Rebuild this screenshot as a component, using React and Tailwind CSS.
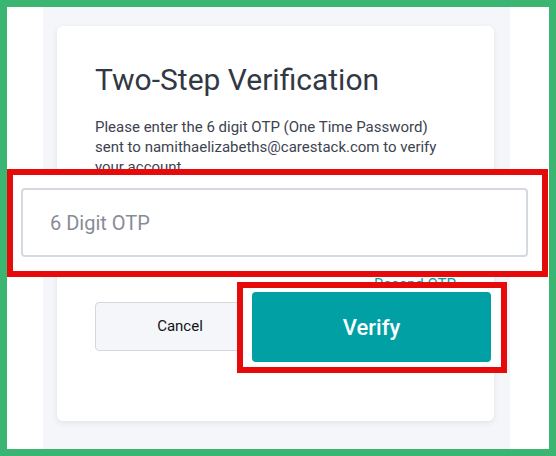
export default function App() {
    return (
        <div className="relative w-[556px] h-[456px] border-[7px] border-[#3bb672] bg-white overflow-hidden font-['Roboto',sans-serif]">
            <div className="flex h-full">
                <div className="w-[36px] bg-white" />

                <div className="w-[467px] h-full bg-[#f5f6fa] pl-[14px] pt-[19px]">
                    <div className="w-[437px] h-[395px] bg-white rounded-md shadow-[0_2px_6px_rgba(0,0,0,0.08)] px-[38px] pt-[36px]">
                        <h1 className="text-[30px] leading-[36px] font-normal text-[#323844]">
                            Two-Step Verification
                        </h1>

                        <p className="mt-[19px] text-[15px] leading-[20px] text-[#3d434f]">
                            Please enter the 6 digit OTP (One Time Password) sent to namithaelizabeths@carestack.com to verify your account.
                        </p>

                        <input
                            className="mt-[14px] w-full h-[50px] border border-[#d5d9e0] rounded px-4 text-[15px] outline-none"
                            placeholder="6 Digit OTP"
                        />

                        <div className="mt-[33px] text-right text-[15px] leading-[20px] text-[#00a0a5]">
                            Resend OTP
                        </div>

                        <div className="mt-[8px] flex gap-[10px]">
                            <button className="w-[170px] h-[49px] bg-[#f5f6fa] border border-[#d3d7de] rounded text-[15px] font-normal text-[#111317]">
                                Cancel
                            </button>
                            <button className="flex-1 h-[49px] bg-[#00a0a5] rounded text-[15px] text-white">
                                Verify
                            </button>
                        </div>
                    </div>
                </div>

                <div className="flex-1 bg-white" />
            </div>

            {/* highlighted OTP field */}
            <div className="absolute left-0 top-[162px] w-[541px] h-[108px] border-[6px] border-[#e60a0a] bg-white pl-[8px] pt-[13px]">
                <div className="w-[507px] h-[69px] border-2 border-[#d5d9e0] rounded flex items-center pl-[27px]">
                    <span className="text-[20px] text-[#878c96]">6 Digit OTP</span>
                </div>
            </div>

            {/* highlighted Verify button */}
            <div className="absolute left-[230px] top-[275px] w-[270px] h-[91px] border-[6px] border-[#e60a0a] bg-white pl-[9px] pt-[4px]">
                <div className="w-[239px] h-[70px] bg-[#00a0a5] rounded flex items-center justify-center">
                    <span className="text-[22px] font-medium text-white">Verify</span>
                </div>
            </div>
        </div>
    );
}
